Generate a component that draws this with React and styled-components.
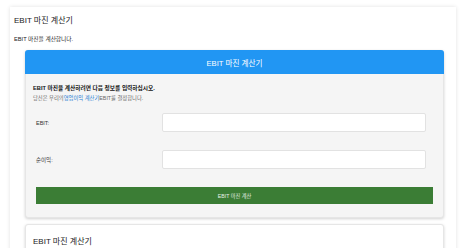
import styled, { createGlobalStyle } from 'styled-components'

const GlobalStyle = createGlobalStyle`
  body {
    margin: 0;
    background: #fff;
    font-family: "Liberation Sans", "Noto Sans CJK KR", sans-serif;
    color: #222;
  }
`;

const Page = styled.div`
  padding: 7px 18px 40px 10px;
`;

const Panel = styled.div`
  background: #fff;
  box-shadow: 0 0 4px rgba(0, 0, 0, 0.12);
  padding: 8px 4px 20px;
`;

const Title = styled.h2`
  margin: 0;
  font-size: 8px;
  line-height: 11px;
  font-weight: normal;
  color: #222;
`;

const Lead = styled.p`
  margin: 9px 0 0;
  font-size: 5.7px;
  line-height: 8px;
  color: #222;
`;

const Card = styled.div`
  margin: ${(p) => p.$gap || 7}px 8px 0 11px;
  border-radius: 3px;
  box-shadow: 0 1px 3px rgba(0, 0, 0, 0.18);
  background: ${(p) => (p.$plain ? '#fff' : '#f5f5f5')};
  border: 1px solid #e6e6e6;
`;

const CardHeader = styled.div`
  height: 24px;
  background: #2196f3;
  color: #fff;
  border-radius: 3px 3px 0 0;
  display: flex;
  align-items: center;
  justify-content: center;
  font-size: 7.6px;
  margin: -1px -1px 0;
`;

const CardBody = styled.div`
  padding: 10px 7px 13px;
`;

const Intro = styled.p`
  margin: 0;
  font-size: 5.7px;
  line-height: 8px;
  font-weight: bold;
  color: #111;
`;

const Note = styled.p`
  margin: 2px 0 0;
  font-size: 5.3px;
  line-height: 8px;
  color: #666;

  a {
    color: #2a7fd4;
    text-decoration: none;
  }
`;

const Form = styled.div`
  padding: 11px 3px 0;
  display: flex;
  flex-direction: column;
  gap: 18px;
`;

const Row = styled.div`
  display: flex;
  align-items: center;
`;

const Label = styled.label`
  width: 126px;
  font-size: 5.5px;
  color: #333;
`;

const Input = styled.input`
  flex: 1;
  height: 19px;
  box-sizing: border-box;
  margin-right: 7px;
  border: 1px solid #e2e2e2;
  border-radius: 2px;
  background: #fff;
  outline: none;
`;

const Button = styled.button`
  height: 17px;
  border: none;
  background: #3b7d35;
  color: #e8f0e6;
  font-family: inherit;
  font-size: 5.2px;
  cursor: pointer;
`;

const ResultTitle = styled.h3`
  margin: 0;
  padding: 11px 7px 12px;
  font-size: 8px;
  line-height: 11px;
  font-weight: normal;
  color: #222;
`;

function App() {
  return (
    <Page>
      <GlobalStyle />
      <Panel>
        <Title>EBIT 마진 계산기</Title>
        <Lead>EBIT 마진을 계산합니다.</Lead>

        <Card>
          <CardHeader>EBIT 마진 계산기</CardHeader>
          <CardBody>
            <Intro>EBIT 마진을 계산하려면 다음 정보를 입력하십시오.</Intro>
            <Note>
              당신은 우리의<a href="#">영업이익 계산기</a>EBIT를 결정합니다.
            </Note>
            <Form>
              <Row>
                <Label>EBIT:</Label>
                <Input type="text" />
              </Row>
              <Row>
                <Label>순이익:</Label>
                <Input type="text" />
              </Row>
              <Button>EBIT 마진 계산</Button>
            </Form>
          </CardBody>
        </Card>

        <Card $plain $gap={6}>
          <ResultTitle>EBIT 마진 계산기</ResultTitle>
        </Card>
      </Panel>
    </Page>
  );
}

export default App
